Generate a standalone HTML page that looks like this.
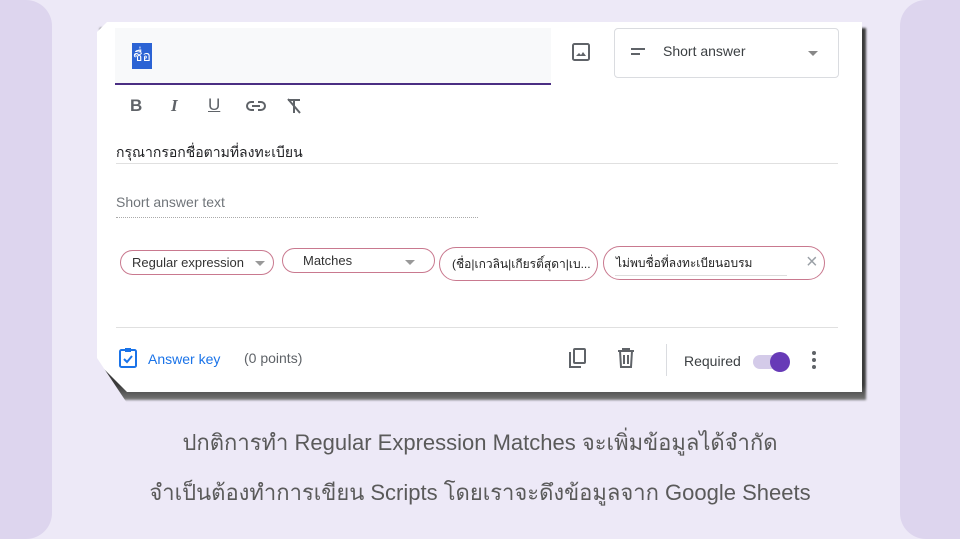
<!DOCTYPE html>
<html><head><meta charset="utf-8"><style>
*{margin:0;padding:0;box-sizing:border-box}
body{width:960px;height:539px;background:#ede9f7;position:relative;overflow:hidden;font-family:"Liberation Sans",sans-serif;color:#202124}
.side{position:absolute;top:0;height:539px;width:52px;background:#ddd5ee}
.l{left:0;border-radius:0 26px 26px 0}
.r{right:0;width:60px;border-radius:26px 0 0 26px}
.shadow{position:absolute;left:100px;top:28px;width:766px;height:372px;background:linear-gradient(#3a3a3a,#3a3a3a 96%,#777);filter:blur(1px)}
.card{position:absolute;left:97px;top:22px;width:765px;height:370px;background:#fff;clip-path:polygon(10px 0,100% 0,100% 100%,30px 100%,0 340px,0 10px)}
.abs{position:absolute;white-space:nowrap}
.pill{position:absolute;border:1.3px solid #c9798f;border-radius:14px;height:25px;font-size:13px;line-height:23px;padding-left:11px;color:#333;white-space:nowrap;overflow:hidden}
.tri{position:absolute;width:0;height:0;border-left:5px solid transparent;border-right:5px solid transparent;border-top:5px solid #888}
.cap{position:absolute;width:960px;text-align:center;font-size:22px;color:#5a5a5a;font-weight:300;white-space:nowrap}
</style></head><body>
<div class="side l"></div><div class="side r"></div>
<div class="shadow"></div>
<div class="card">
 <div class="abs" style="left:18px;top:6px;width:436px;height:57px;background:#f8f9fa;border-bottom:2px solid #4b2e83"></div>
 <div class="abs" style="left:35px;top:21px;width:20px;height:26px;background:#2b63d4;color:#fff;font-size:14px;line-height:26px;text-align:center">ชื่อ</div>
 <svg class="abs" style="left:474px;top:20px" width="20" height="20" viewBox="0 0 20 20"><rect x="2" y="2" width="16" height="16" rx="1.5" fill="none" stroke="#5f6368" stroke-width="2"/><path d="M5 14l3-3 2 2 2-3 3 4z" fill="#5f6368"/></svg>
 <div class="abs" style="left:517px;top:6px;width:225px;height:50px;border:1px solid #dadce0;border-radius:4px"></div>
 <div class="abs" style="left:534px;top:26px;width:14px;height:2px;background:#5f6368"></div>
 <div class="abs" style="left:534px;top:31px;width:9px;height:2px;background:#5f6368"></div>
 <div class="abs" style="left:566px;top:21px;font-size:14px;color:#3c4043">Short answer</div>
 <div class="tri" style="left:711px;top:29px"></div>
 <div class="abs" style="left:33px;top:74px;font-size:17px;font-weight:bold;color:#5f6368">B</div>
 <div class="abs" style="left:74px;top:74px;font-size:17px;font-style:italic;font-weight:bold;color:#5f6368;font-family:'Liberation Serif',serif">I</div>
 <div class="abs" style="left:111px;top:73px;font-size:17px;text-decoration:underline;color:#5f6368">U</div>
 <svg class="abs" style="left:149px;top:77px" width="20" height="14" viewBox="0 0 20 14"><path d="M8 3H5a4 4 0 000 8h3M12 3h3a4 4 0 010 8h-3M6 7h8" fill="none" stroke="#5f6368" stroke-width="2"/></svg>
 <svg class="abs" style="left:188px;top:75px" width="18" height="18" viewBox="0 0 18 18"><path d="M3 3h12M9 3v13M3 2l12 14" fill="none" stroke="#5f6368" stroke-width="2"/></svg>
 <div class="abs" style="left:19px;top:120px;font-size:14px;color:#202124">กรุณากรอกชื่อตามที่ลงทะเบียน</div>
 <div class="abs" style="left:19px;top:141px;width:722px;height:1px;background:#e0e0e0"></div>
 <div class="abs" style="left:19px;top:172px;font-size:14px;color:#70757a">Short answer text</div>
 <div class="abs" style="left:19px;top:195px;width:362px;border-top:1px dotted #aaa"></div>
 <div class="pill" style="left:23px;top:228px;width:154px">Regular expression</div><div class="tri" style="left:158px;top:239px;border-top-color:#999"></div>
 <div class="pill" style="left:185px;top:226px;width:153px;padding-left:20px">Matches</div><div class="tri" style="left:308px;top:238px;border-top-color:#999"></div>
 <div class="pill" style="left:342px;top:225px;width:159px;height:34px;line-height:32px;border-radius:17px;padding-left:12px;color:#222;font-size:12px">(ชื่อ|เกวลิน|เกียรติ์สุดา|เบ...</div>
 <div class="pill" style="left:506px;top:224px;width:222px;height:34px;line-height:32px;border-radius:17px;padding-left:12px;color:#222;font-size:12px">ไม่พบชื่อที่ลงทะเบียนอบรม</div>
 <div class="abs" style="left:518px;top:253px;width:172px;height:1px;background:#ddd"></div>
 <div class="abs" style="left:709px;top:229px;font-size:20px;color:#9aa0a6">×</div>
 <div class="abs" style="left:19px;top:305px;width:722px;height:1px;background:#e0e0e0"></div>
 <svg class="abs" style="left:21px;top:325px" width="20" height="22" viewBox="0 0 20 22"><rect x="2" y="3" width="16" height="17" rx="1.5" fill="none" stroke="#1a73e8" stroke-width="2"/><rect x="7" y="1" width="6" height="4" fill="#1a73e8"/><path d="M6 12l3 3 5-6" fill="none" stroke="#1a73e8" stroke-width="2"/></svg>
 <div class="abs" style="left:51px;top:329px;font-size:14px;color:#1a73e8">Answer key</div>
 <div class="abs" style="left:147px;top:328px;font-size:14px;color:#5f6368">(0 points)</div>
 <svg class="abs" style="left:470px;top:325px" width="20" height="22" viewBox="0 0 20 22"><path d="M3 5v15h11" fill="none" stroke="#5f6368" stroke-width="2"/><rect x="7" y="2" width="11" height="14" rx="1" fill="none" stroke="#5f6368" stroke-width="2"/></svg>
 <svg class="abs" style="left:519px;top:325px" width="20" height="22" viewBox="0 0 20 22"><path d="M2 4h16M7 4V2h6v2M4 4l1 16h10l1-16M8 8v9M12 8v9" fill="none" stroke="#5f6368" stroke-width="2"/></svg>
 <div class="abs" style="left:569px;top:322px;width:1px;height:32px;background:#dadce0"></div>
 <div class="abs" style="left:587px;top:331px;font-size:14px;color:#3c4043">Required</div>
 <div class="abs" style="left:656px;top:333px;width:34px;height:14px;border-radius:7px;background:#d4cbe9"></div>
 <div class="abs" style="left:673px;top:330px;width:20px;height:20px;border-radius:50%;background:#673ab7"></div>
 <div class="abs" style="left:715px;top:329px;width:4px;height:4px;border-radius:50%;background:#5f6368;box-shadow:0 7px #5f6368,0 14px #5f6368"></div>
</div>
<div class="abs" style="left:90px;top:358px;width:40px;height:45px;background:#ede9f7;clip-path:polygon(0 0,7px 0,37px 100%,0 100%)"></div>
<div class="cap" style="top:425px">ปกติการทำ Regular Expression Matches จะเพิ่มข้อมูลได้จำกัด</div>
<div class="cap" style="top:475px">จำเป็นต้องทำการเขียน Scripts โดยเราจะดึงข้อมูลจาก Google Sheets</div>
</body></html>
